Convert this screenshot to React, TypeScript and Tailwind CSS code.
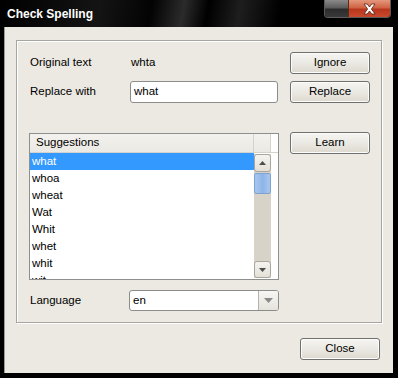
import React from "react";

const SUGGESTIONS = ["what", "whoa", "wheat", "Wat", "Whit", "whet", "whit", "wit"];

function Btn({ label }: { label: string }) {
  return (
    <button className="w-[80px] h-[22px] rounded-[3px] border border-[#707070] bg-[linear-gradient(#f6f5f2,#ebe9e3_50%,#ddd9cf)] shadow-[inset_0_0_0_1px_#fcfcfb] text-[11.5px] text-black flex items-center justify-center">
      {label}
    </button>
  );
}

function Tri({ down }: { down?: boolean }) {
  return (
    <svg width="7" height="4" viewBox="0 0 7 4">
      <path d={down ? "M0 0h7L3.5 4z" : "M0 4h7L3.5 0z"} fill="#4d4d4d" />
    </svg>
  );
}

export default function App() {
  return (
    <div className="w-[398px] h-[378px] bg-black flex flex-col overflow-hidden font-['Liberation_Sans',Arial,sans-serif] text-[11.5px] text-black">
      {/* title bar */}
      <div className="h-[27px] shrink-0 flex bg-[linear-gradient(100deg,#000_0%,#141414_25%,#030303_38%,#2b2b2b_46%,#000_52%,#1e1e1e_60%,#000_70%,#000_100%)]">
        <span className="pl-[7px] pt-[7px] text-white font-bold text-[12px] leading-[14px]">
          Check Spelling
        </span>
        <div className="ml-auto mr-[7px] flex h-[18px] rounded-b-[4px] overflow-hidden border border-t-0 border-[#5b5b5b]">
          <div className="w-[23px] bg-[linear-gradient(#8a8a8a,#5c5c5c_45%,#2c2c2c_55%,#3a3a3a)]" />
          <div className="w-[42px] flex items-center justify-center bg-[linear-gradient(#e4977c,#d06444_45%,#b8361d_55%,#c94a2e)] border-l border-[#5a2a1a]">
            <svg width="15" height="12" viewBox="0 0 15 12">
              <path
                d="M2 1h3.2l2.3 3 2.3-3H13L9.4 6 13 11H9.8L7.5 8 5.2 11H2l3.6-5z"
                fill="#fff"
                stroke="#5a1e12"
                strokeWidth="0.8"
              />
            </svg>
          </div>
        </div>
      </div>

      {/* client area */}
      <div className="flex-1 ml-[4px] mr-[5px] mb-[5px] bg-[#ece9e2] border-l border-[#9a9a9a] flex flex-col">
        {/* group box */}
        <div className="mt-[13px] ml-[11px] w-[366px] h-[283px] border border-[#a7a59f] shadow-[inset_1px_1px_0_#fff,1px_1px_0_#fff] pl-[12px] pt-[11px] flex flex-col">
          <div className="flex items-center h-[22px]">
            <span className="w-[101px] pl-[1px]">Original text</span>
            <span className="w-[160px] pl-[1px]">whta</span>
            <Btn label="Ignore" />
          </div>

          <div className="flex items-center h-[22px] mt-[7px]">
            <span className="w-[101px] pl-[1px]">Replace with</span>
            <div className="w-[148px] h-[22px] rounded-[3px] border border-[#8c8c8c] bg-white flex items-center pl-[3px]">
              what
            </div>
            <div className="w-[12px]" />
            <Btn label="Replace" />
          </div>

          <div className="flex items-start mt-[29px]">
            {/* list */}
            <div className="mt-[1px] w-[250px] h-[147px] border border-[#8e8f8f] bg-white flex flex-col overflow-hidden">
              <div className="h-[19px] shrink-0 flex border-b border-[#d5d2ca] bg-[linear-gradient(#f3f2ee,#ebe9e3)]">
                <div className="w-[223px] pl-[6px] flex items-center">Suggestions</div>
                <div className="w-[17px] border-l border-[#d5d2ca]" />
                <div className="flex-1 border-l border-[#d5d2ca] bg-white" />
              </div>
              <div className="flex flex-1 min-h-0">
                <div className="w-[224px] flex flex-col overflow-hidden">
                  {SUGGESTIONS.map((w, i) => (
                    <div
                      key={w}
                      className={
                        i === 0
                          ? "h-[17px] shrink-0 pl-[2px] flex items-center bg-[#3399ff] text-white"
                          : "h-[17px] shrink-0 pl-[2px] flex items-center"
                      }
                    >
                      {w}
                    </div>
                  ))}
                </div>
                {/* scrollbar */}
                <div className="w-[17px] mt-[1px] mb-[1px] bg-[#d8d3c9] flex flex-col">
                  <div className="h-[18px] rounded-[3px] border border-[#a9a69d] bg-[linear-gradient(#f5f4f0,#e4e0d7)] flex items-center justify-center">
                    <Tri />
                  </div>
                  <div className="h-[21px] mt-[1px] rounded-[2px] border border-[#7da2ce] bg-[linear-gradient(90deg,#a8c7ef,#8eb5e8,#a8c7ef)]" />
                  <div className="flex-1" />
                  <div className="h-[17px] rounded-[3px] border border-[#a9a69d] bg-[linear-gradient(#f5f4f0,#e4e0d7)] flex items-center justify-center">
                    <Tri down />
                  </div>
                </div>
                <div className="flex-1 bg-white" />
              </div>
            </div>
            <div className="ml-[11px]">
              <Btn label="Learn" />
            </div>
          </div>

          <div className="flex items-center h-[21px] mt-[10px]">
            <span className="w-[100px] pl-[1px]">Language</span>
            <div className="w-[150px] h-[21px] rounded-[3px] border border-[#8c8c8c] bg-white flex">
              <div className="flex-1 pl-[3px] flex items-center">en</div>
              <div className="w-[20px] border-l border-[#b5b2aa] bg-[linear-gradient(#f7f6f3,#e6e3dc)] rounded-r-[2px] flex items-center justify-center">
                <svg width="9" height="5" viewBox="0 0 9 5">
                  <path d="M0 0h9L4.5 5z" fill="#8a8a8a" />
                </svg>
              </div>
            </div>
          </div>
        </div>

        <div className="flex justify-end mt-[15px] mr-[13px]">
          <Btn label="Close" />
        </div>
      </div>
    </div>
  );
}
